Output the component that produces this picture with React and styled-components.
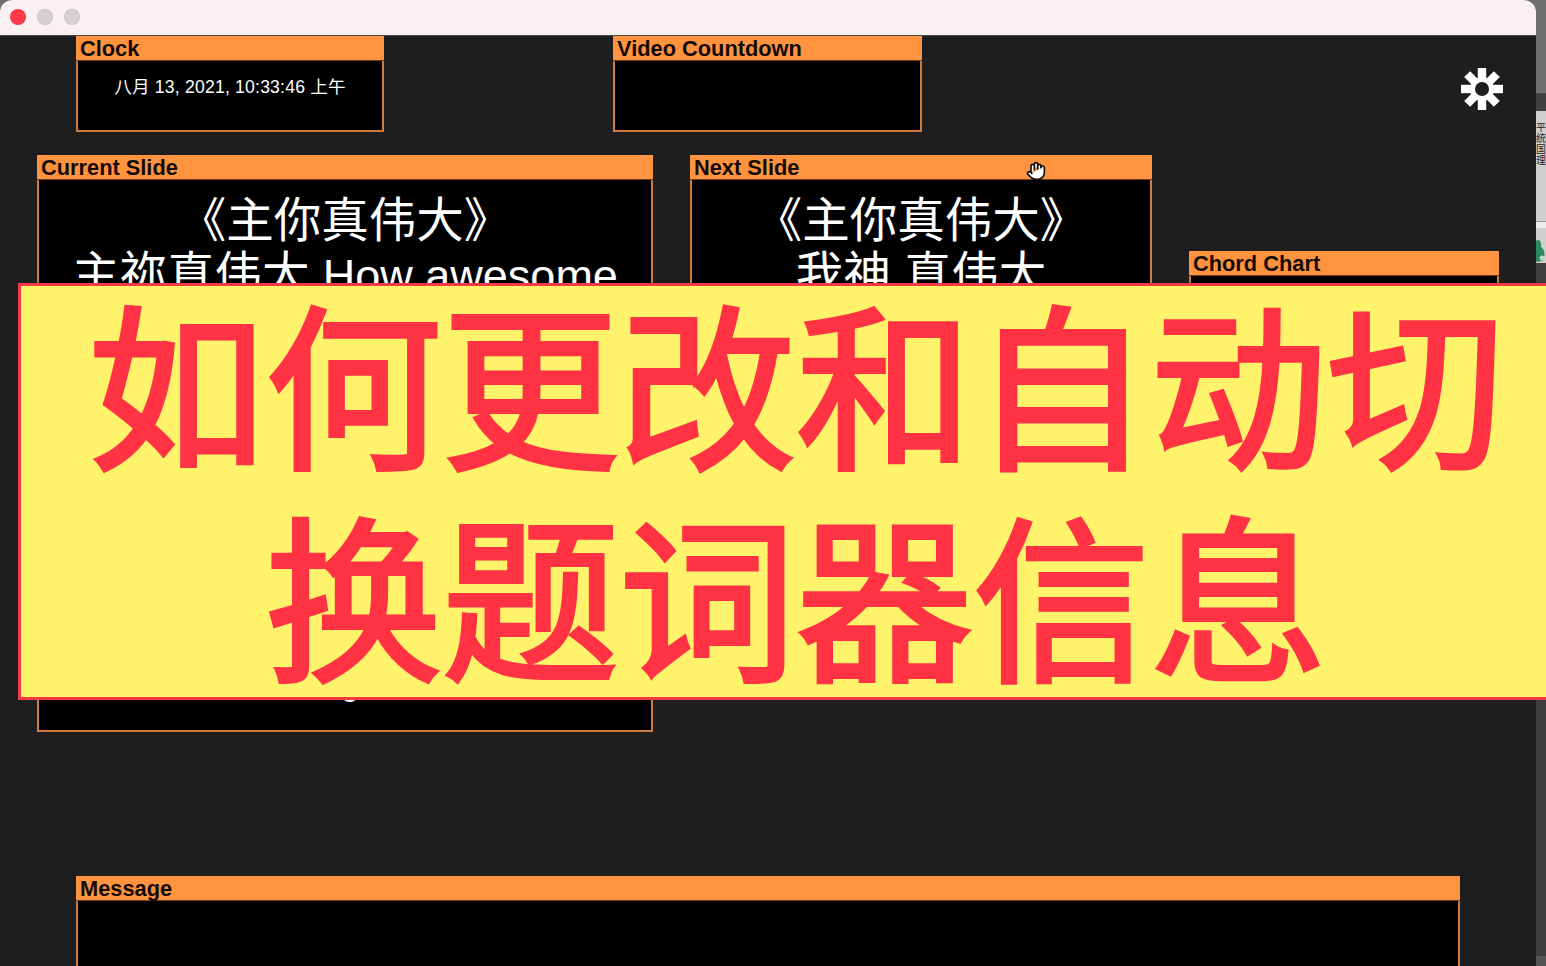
import React from "react";
import styled, { createGlobalStyle } from "styled-components";
import { Hand } from "lucide-react";

const FONT = `"Liberation Sans", "Noto Sans CJK SC", sans-serif`;

const GlobalStyle = createGlobalStyle`
  html, body {
    margin: 0;
    padding: 0;
    background: #3d3d3d;
  }
`;

const GearIcon = () => (
  <GearSvg viewBox="-22 -22 44 44">
    {[0, 45, 90, 135].map((angle) => (
      <rect
        key={angle}
        x="-4.2"
        y="-21"
        width="8.4"
        height="42"
        fill="#fff"
        transform={`rotate(${angle})`}
      />
    ))}
    <circle r="12" fill="#fff" />
    <circle r="7" fill="#1e1e1e" />
  </GearSvg>
);

const Panel = ({ title, width, height, top, children }) => (
  <PanelBox $width={width} $height={height} $top={top}>
    <PanelHeader>{title}</PanelHeader>
    <PanelBody>{children}</PanelBody>
  </PanelBox>
);

const App = () => {
  return (
    <Screen>
      <GlobalStyle />
      <Window>
        <TitleBar>
          <Light $color="#ff3b47" />
          <Light $color="#d6d0d3" />
          <Light $color="#d6d0d3" />
        </TitleBar>
        <Canvas>
          <TopRow>
            <Panel title="Clock" width={308} height={96}>
              <ClockText>八月 13, 2021, 10:33:46 上午</ClockText>
            </Panel>
            <Panel title="Video Countdown" width={309} height={96} />
            <GearIcon />
          </TopRow>
          <SlideRow>
            <Panel title="Current Slide" width={616} height={577}>
              <SlideText>《主你真伟大》</SlideText>
              <SlideText>
                主祢真伟大 <Latin>How awesome</Latin>
              </SlideText>
              <SlideTail>g</SlideTail>
            </Panel>
            <Panel title="Next Slide" width={462} height={500}>
              <SlideText>《主你真伟大》</SlideText>
              <SlideText>我神 真伟大</SlideText>
              <Cursor>
                <Hand size={20} color="#111" fill="#fff" strokeWidth={2} />
              </Cursor>
            </Panel>
            <Panel title="Chord Chart" width={310} height={300} top={96} />
          </SlideRow>
          <MessageRow>
            <Panel title="Message" width={1384} height={200} />
          </MessageRow>
        </Canvas>
      </Window>
      <Desktop>
        <DesktopTop />
        <DesktopBar />
        <DesktopPage>
          <PageText>
            平<br />统<br />国<br />理
          </PageText>
          <PageRule />
          <PageArt viewBox="0 0 10 26">
            <path d="M0 4 C3 0 6 6 5 10 C9 12 10 20 6 24 L0 25 Z" fill="#2d8a5f" />
            <circle cx="6" cy="21" r="2.5" fill="#b9d8c8" />
          </PageArt>
        </DesktopPage>
        <DesktopBar />
        <DesktopFoot />
      </Desktop>
      <Banner>
        <BannerLine>如何更改和自动切</BannerLine>
        <BannerLine>换题词器信息</BannerLine>
      </Banner>
    </Screen>
  );
};

export default App;

const Screen = styled.div`
  position: relative;
  display: flex;
  width: 1546px;
  height: 966px;
  overflow: hidden;
  background: #6f6f6f;
  font-family: ${FONT};
`;

const Window = styled.div`
  display: flex;
  flex-direction: column;
  width: 1536px;
  height: 966px;
  flex-shrink: 0;
  border-radius: 12px 12px 0 0;
  overflow: hidden;
  background: #1e1e1e;
`;

const TitleBar = styled.div`
  display: flex;
  align-items: center;
  gap: 11px;
  box-sizing: border-box;
  height: 36px;
  flex-shrink: 0;
  padding: 0 0 2px 10px;
  background: #f9f0f2;
  border-bottom: 1px solid #4a4244;
`;

const Light = styled.span`
  box-sizing: border-box;
  width: 16px;
  height: 16px;
  border-radius: 50%;
  background: ${({ $color }) => $color};
  border: 1px solid rgba(0, 0, 0, 0.06);
`;

const Canvas = styled.div`
  display: flex;
  flex-direction: column;
  flex: 1;
  min-height: 0;
`;

const TopRow = styled.div`
  display: flex;
  align-items: flex-start;
  gap: 229px;
  padding-left: 76px;
`;

const SlideRow = styled.div`
  display: flex;
  align-items: flex-start;
  gap: 37px;
  margin-top: 23px;
  padding-left: 37px;
`;

const MessageRow = styled.div`
  display: flex;
  margin-top: 144px;
  padding-left: 76px;
`;

const PanelBox = styled.section`
  display: flex;
  flex-direction: column;
  box-sizing: border-box;
  flex-shrink: 0;
  width: ${({ $width }) => $width}px;
  height: ${({ $height }) => $height}px;
  margin-top: ${({ $top }) => $top || 0}px;
  border: 2px solid #d07b3e;
  background: #000;
`;

const PanelHeader = styled.h2`
  box-sizing: border-box;
  height: 25px;
  flex-shrink: 0;
  margin: -2px -2px 0;
  padding-left: 4px;
  background: #ff9340;
  border-bottom: 1px solid #6e3c17;
  color: #140a04;
  font-size: 21.8px;
  font-weight: 700;
  line-height: 26px;
  white-space: nowrap;
`;

const PanelBody = styled.div`
  position: relative;
  display: flex;
  flex-direction: column;
  flex: 1;
  min-height: 0;
  padding-top: 14px;
  text-align: center;
  color: #fff;
`;

const ClockText = styled.div`
  font-size: 17.6px;
  line-height: 24px;
  letter-spacing: 0.2px;
  white-space: nowrap;
`;

const SlideText = styled.div`
  font-size: 47.5px;
  font-weight: 400;
  line-height: 54px;
  white-space: nowrap;
`;

const Latin = styled.span`
  font-size: 45px;
`;

const SlideTail = styled.div`
  margin-top: auto;
  padding: 0 0 30px 10px;
  font-size: 32px;
  line-height: 32px;
`;

const Cursor = styled.div`
  position: absolute;
  top: -19px;
  left: 334px;
  display: flex;
`;

const GearSvg = styled.svg`
  width: 44px;
  height: 44px;
  flex-shrink: 0;
  margin: 31px 0 0 auto;
  margin-right: 32px;
`;

const Desktop = styled.aside`
  display: flex;
  flex-direction: column;
  flex: 1;
  min-width: 0;
  overflow: hidden;
  background: #3d3d3d;
`;

const DesktopTop = styled.div`
  height: 93px;
  flex-shrink: 0;
  background: #6f6f6f;
`;

const DesktopBar = styled.div`
  height: 18px;
  flex-shrink: 0;
  background: #414141;
`;

const DesktopPage = styled.div`
  display: flex;
  flex-direction: column;
  height: 152px;
  flex-shrink: 0;
  padding-top: 11px;
  box-sizing: border-box;
  background: #cfcfcf;
`;

const PageText = styled.div`
  height: 44px;
  color: #222;
  font-family: "Liberation Serif", "Noto Sans CJK SC", serif;
  font-size: 10px;
  line-height: 11px;
`;

const PageRule = styled.div`
  height: 6px;
  margin-top: 55px;
  background: #ededed;
  border-top: 1px solid #999;
`;

const PageArt = styled.svg`
  width: 10px;
  height: 26px;
  margin-top: 9px;
`;

const DesktopFoot = styled.div`
  height: 10px;
  flex-shrink: 0;
  margin-top: auto;
  background: #555;
`;

const Banner = styled.div`
  position: absolute;
  top: 283px;
  left: 18px;
  box-sizing: border-box;
  display: flex;
  flex-direction: column;
  align-items: center;
  justify-content: center;
  width: 1556px;
  height: 417px;
  padding-top: 18px;
  background: #fff36b;
  border: 3px solid #f13a44;
  color: #ff3344;
`;

const BannerLine = styled.div`
  font-size: 177px;
  font-weight: 400;
  -webkit-text-stroke: 4px #ff3344;
  line-height: 212px;
  white-space: nowrap;
`;
